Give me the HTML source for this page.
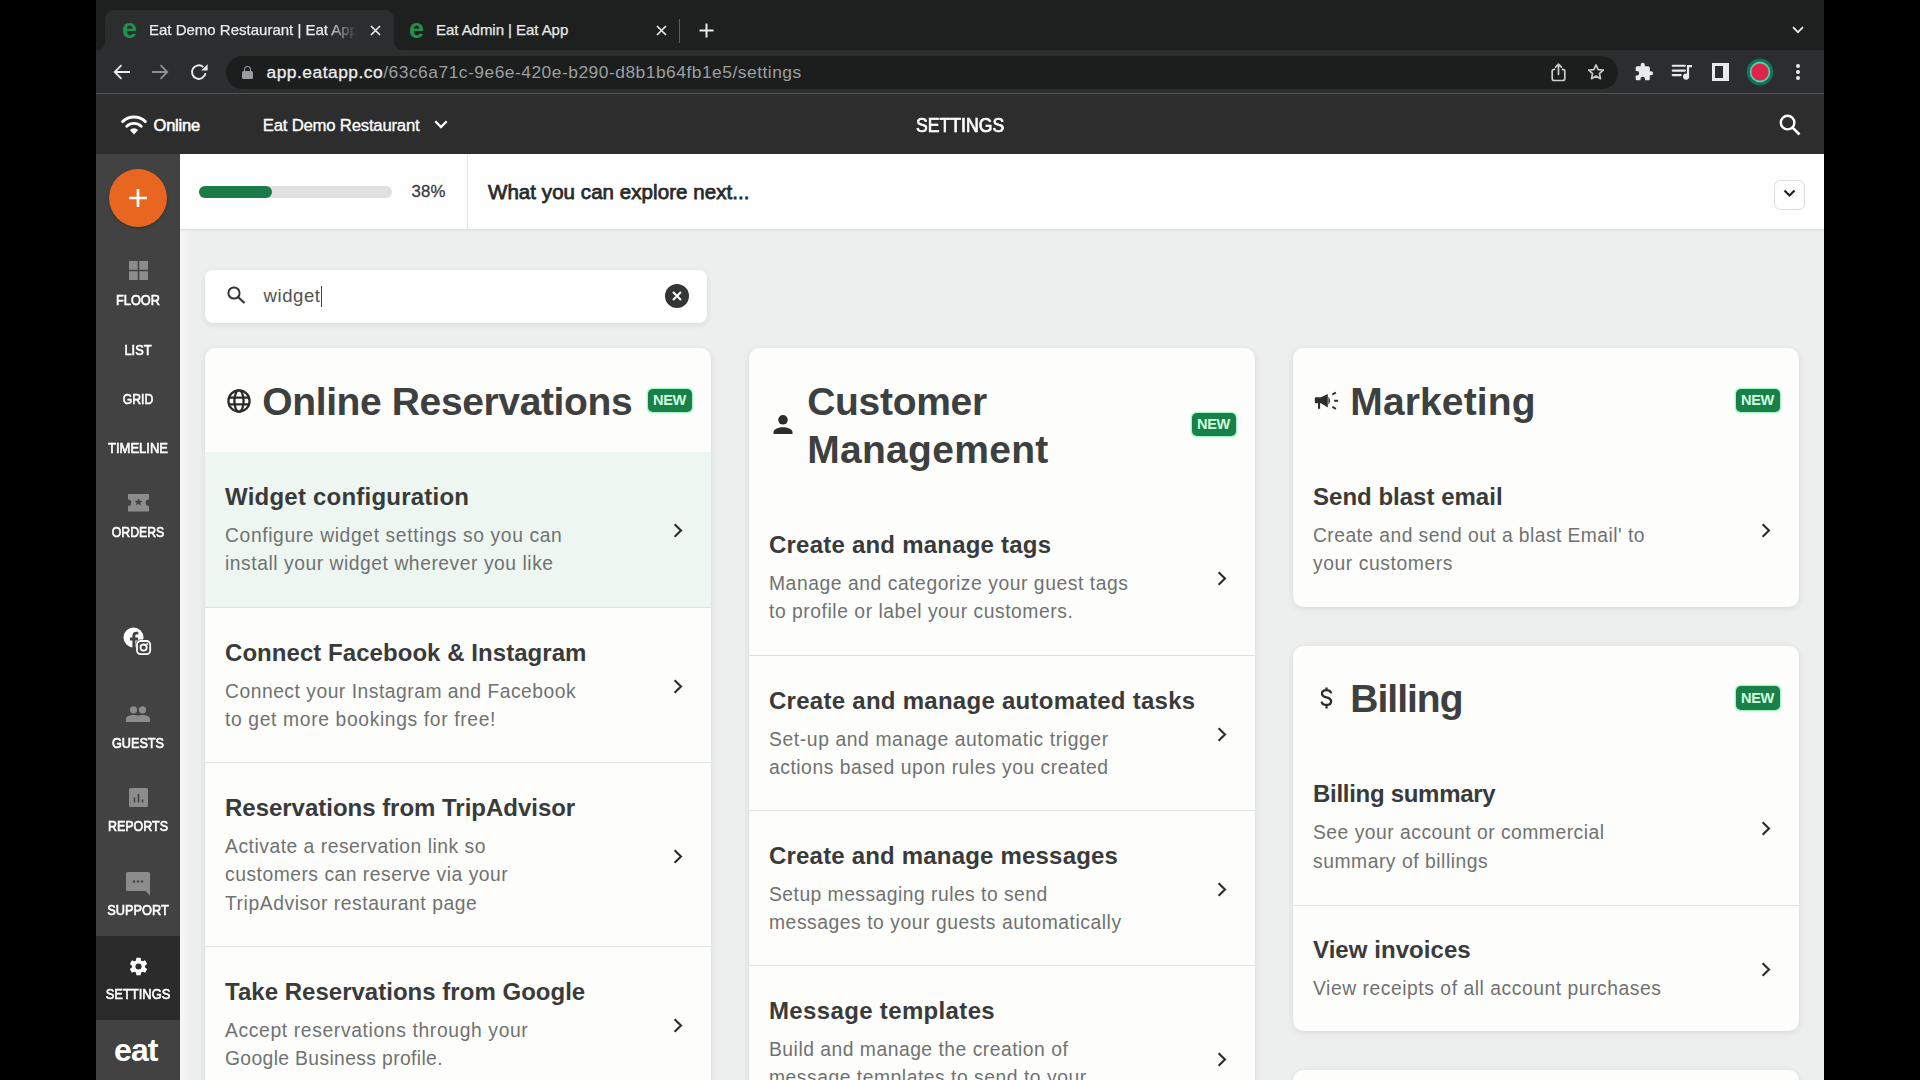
<!DOCTYPE html><html><head><meta charset="utf-8"><title>Settings</title><style>
*{margin:0;padding:0;box-sizing:border-box}
html,body{width:1920px;height:1080px;overflow:hidden;background:#000;font-family:"Liberation Sans", sans-serif}
.t{position:absolute;white-space:nowrap}
.a{position:absolute}
svg{position:absolute;overflow:visible}
.card{position:absolute;width:506px;background:#fdfdfc;border-radius:10px;box-shadow:0 2px 7px rgba(0,0,0,0.08),0 0 2px rgba(0,0,0,0.05);overflow:hidden}
.row{position:absolute;left:0;width:506px;border-top:1px solid #dfe1e0}
</style></head><body>
<div class="a" style="left:96px;top:0;width:1728px;height:50px;background:#1e201f"></div>
<div class="a" style="left:105px;top:10px;width:289px;height:42px;background:#2b2d2e;border-radius:9px 9px 0 0"></div>
<div class="a" style="left:97px;top:42px;width:8px;height:8px;background:#2b2d2e"></div>
<div class="a" style="left:97px;top:34px;width:8px;height:16px;background:#1e201f;border-radius:0 0 8px 0"></div>
<div class="a" style="left:394px;top:42px;width:8px;height:8px;background:#2b2d2e"></div>
<div class="a" style="left:394px;top:34px;width:8px;height:16px;background:#1e201f;border-radius:0 0 0 8px"></div>
<div class="a" style="left:96px;top:50px;width:1728px;height:44px;background:#2b2d2e;border-bottom:1px solid #505254"></div>
<div class="t" style="left:122.0px;top:13.5px;font-size:27px;line-height:30px;font-weight:700;color:#21914f">e</div>
<div class="t" style="left:409.0px;top:13.5px;font-size:27px;line-height:30px;font-weight:700;color:#21914f">e</div>
<div class="t" style="left:149px;top:20.5px;font-size:15px;line-height:18px;color:#e9eaea;width:208px;-webkit-text-stroke:0.25px #e9eaea;overflow:hidden;-webkit-mask-image:linear-gradient(90deg,#000 85%,transparent 100%)">Eat Demo Restaurant | Eat App</div>
<div class="t" style="left:436px;top:20.5px;font-size:15px;line-height:18px;color:#e9eaea;letter-spacing:-0.05px;-webkit-text-stroke:0.25px #e9eaea">Eat Admin | Eat App</div>
<svg style="left:369.5px;top:24.5px" width="11" height="11" viewBox="0 0 11 11"><path d="M1 1L10 10M10 1L1 10" stroke="#e8eaed" stroke-width="1.7"/></svg>
<svg style="left:655.5px;top:24.5px" width="11" height="11" viewBox="0 0 11 11"><path d="M1 1L10 10M10 1L1 10" stroke="#e8eaed" stroke-width="1.7"/></svg>
<div class="a" style="left:679px;top:19px;width:1px;height:24px;background:#5a5c5e"></div>
<svg style="left:699px;top:23px" width="15" height="15" viewBox="0 0 15 15"><path d="M7.5 0.5V14.5M0.5 7.5H14.5" stroke="#e8eaed" stroke-width="2"/></svg>
<svg style="left:1792px;top:26px" width="12" height="8" viewBox="0 0 12 8"><path d="M1 1.2L6 6.2L11 1.2" fill="none" stroke="#e8eaed" stroke-width="1.8"/></svg>
<svg style="left:113px;top:64px" width="18" height="16" viewBox="0 0 18 16"><path d="M17 8H2M8.5 1.2L1.7 8L8.5 14.8" fill="none" stroke="#e8eaed" stroke-width="1.8"/></svg>
<svg style="left:151px;top:64px" width="18" height="16" viewBox="0 0 18 16"><path d="M1 8H16M9.5 1.2L16.3 8L9.5 14.8" fill="none" stroke="#8d9093" stroke-width="1.8"/></svg>
<svg style="left:190px;top:63px" width="19" height="18" viewBox="0 0 19 18"><path d="M15.5 10.2A6.8 6.8 0 1 1 13.3 4" fill="none" stroke="#e8eaed" stroke-width="1.9"/><path d="M17.6 1.2V7.6H11.2Z" fill="#e8eaed"/></svg>
<div class="a" style="left:226px;top:55.5px;width:1392px;height:33px;background:#1c1e1d;border-radius:17px"></div>
<div class="a" style="left:242px;top:71px;width:10.5px;height:8px;background:#9a9d9f;border-radius:1.5px"></div>
<div class="a" style="left:244px;top:66px;width:6.5px;height:8px;border:1.6px solid #9a9d9f;border-bottom:none;border-radius:4px 4px 0 0"></div>
<div class="t" style="left:266.5px;top:62.3px;font-size:17.4px;line-height:20px;letter-spacing:0.5px;color:#9c9fa2"><span style="color:#ececec;-webkit-text-stroke:0.3px #ececec">app.eatapp.co</span>/63c6a71c-9e6e-420e-b290-d8b1b64fb1e5/settings</div>
<svg style="left:1550.5px;top:63px" width="15" height="18" viewBox="0 0 15 18"><path d="M4.3 6.3H3.2A2 2 0 0 0 1.2 8.3V15.5A2 2 0 0 0 3.2 17.5H11.8A2 2 0 0 0 13.8 15.5V8.3A2 2 0 0 0 11.8 6.3H10.7" fill="none" stroke="#c9cbcd" stroke-width="1.7"/><path d="M7.5 11.3V1.4M4.6 4.2L7.5 1.2L10.4 4.2" fill="none" stroke="#c9cbcd" stroke-width="1.7" stroke-linecap="round" stroke-linejoin="round"/></svg>
<svg style="left:1587px;top:63px" width="18" height="18" viewBox="0 0 24 24"><path d="M12 2.5l2.9 6.3 6.8.7-5.1 4.6 1.4 6.8L12 17.4l-6 3.5 1.4-6.8-5.1-4.6 6.8-.7z" fill="none" stroke="#c9cbcd" stroke-width="2.2" stroke-linejoin="round"/></svg>
<svg style="left:1634px;top:62px" width="20" height="20" viewBox="0 0 24 24"><path d="M20.5 11H19V7c0-1.1-.9-2-2-2h-4V3.5a2.5 2.5 0 0 0-5 0V5H4c-1.1 0-2 .9-2 2v3.8h1.5a2.7 2.7 0 0 1 0 5.4H2V20c0 1.1.9 2 2 2h3.8v-1.5a2.7 2.7 0 0 1 5.4 0V22H17c1.1 0 2-.9 2-2v-4h1.5a2.5 2.5 0 0 0 0-5z" fill="#e8eaed"/></svg>
<svg style="left:1672px;top:63px" width="21" height="17" viewBox="0 0 21 17"><path d="M0.7 2.8H12.9M0.7 7.6H12.9M0.7 12.1H8.7" stroke="#e8eaed" stroke-width="2.1" stroke-linecap="round"/><path d="M16 14V3.2H20" fill="none" stroke="#e8eaed" stroke-width="2.2"/><circle cx="14.1" cy="13.6" r="3.1" fill="#e8eaed"/></svg>
<div class="a" style="left:1712px;top:63px;width:17.2px;height:17.8px;background:#e8eaed"></div>
<div class="a" style="left:1715.1px;top:66.2px;width:7.7px;height:11.7px;background:#2b2d2e"></div>
<svg style="left:1746px;top:58px" width="28" height="28" viewBox="0 0 28 28"><circle cx="14" cy="14" r="13.4" fill="#127158"/><circle cx="14" cy="14" r="10.4" fill="#5cc9a4"/><circle cx="14" cy="14" r="8.6" fill="#e0234b"/></svg>
<div class="a" style="left:1795.6px;top:64.1px;width:4px;height:4px;border-radius:50%;background:#e8eaed"></div>
<div class="a" style="left:1795.6px;top:70.1px;width:4px;height:4px;border-radius:50%;background:#e8eaed"></div>
<div class="a" style="left:1795.6px;top:76.1px;width:4px;height:4px;border-radius:50%;background:#e8eaed"></div>
<div class="a" style="left:96px;top:94px;width:1728px;height:60px;background:#2c2d2c"></div>
<svg style="left:121px;top:114px" width="26" height="21" viewBox="0 0 26 21"><path d="M1.6 7.6A16.5 16.5 0 0 1 24.4 7.6" fill="none" stroke="#fff" stroke-width="2.9" stroke-linecap="round"/><path d="M5.8 12.2A10.5 10.5 0 0 1 20.2 12.2" fill="none" stroke="#fff" stroke-width="2.9" stroke-linecap="round"/><path d="M8.9 15.9A6.2 6.2 0 0 1 17.1 15.9L13 20.4Z" fill="#fff"/></svg>
<div class="t" style="left:153.5px;top:117.2px;font-size:16.5px;line-height:16.5px;font-weight:400;color:#ffffff;letter-spacing:-0.2px;-webkit-text-stroke:0.55px #fff;">Online</div>
<div class="t" style="left:262.8px;top:118.0px;font-size:16.8px;line-height:16.8px;font-weight:400;color:#ffffff;letter-spacing:-0.25px;-webkit-text-stroke:0.3px #fff;">Eat Demo Restaurant</div>
<svg style="left:434px;top:120px" width="14" height="9" viewBox="0 0 14 9"><path d="M1.3 1.3L7 7L12.7 1.3" fill="none" stroke="#fff" stroke-width="2.3"/></svg>
<div class="t" style="left:916.0px;top:115.9px;font-size:19.3px;line-height:19.3px;font-weight:400;color:#ffffff;letter-spacing:0px;-webkit-text-stroke:0.7px #fff;transform:scaleX(0.915);transform-origin:0 0;">SETTINGS</div>
<svg style="left:1779px;top:114px" width="22" height="22" viewBox="0 0 22 22"><circle cx="8.6" cy="8.6" r="6.8" fill="none" stroke="#fff" stroke-width="2.4"/><path d="M13.6 13.6L20.5 20.5" stroke="#fff" stroke-width="2.6"/></svg>
<div class="a" style="left:96px;top:154px;width:84px;height:926px;background:#414241"></div>
<div class="a" style="left:96px;top:936px;width:84px;height:84px;background:#2b2b2b"></div>
<div class="a" style="left:109.2px;top:168.6px;width:58.2px;height:58.2px;border-radius:50%;background:#e8661f;box-shadow:0 1px 3px rgba(0,0,0,.25)"></div>
<svg style="left:128.2px;top:187.8px" width="20" height="20" viewBox="0 0 20 20"><path d="M10 1.1V18.9M1.1 10H18.9" stroke="#fff" stroke-width="2.7"/></svg>
<svg style="left:128.5px;top:261px" width="19" height="19" viewBox="0 0 19 19" fill="#8b8c8b"><rect x="0" y="0" width="8.7" height="8.7"/><rect x="10.3" y="0" width="8.7" height="8.7"/><rect x="0" y="10.3" width="8.7" height="8.7"/><rect x="10.3" y="10.3" width="8.7" height="8.7"/></svg>
<div class="t" style="left:96px;width:84px;text-align:center;top:293.2px;font-size:14px;line-height:14px;font-weight:400;color:#fff;-webkit-text-stroke:0.6px #fff;transform:scaleX(0.912);transform-origin:42px 0">FLOOR</div>
<div class="t" style="left:96px;width:84px;text-align:center;top:342.7px;font-size:14px;line-height:14px;font-weight:400;color:#fff;-webkit-text-stroke:0.6px #fff;transform:scaleX(0.913);transform-origin:42px 0">LIST</div>
<div class="t" style="left:96px;width:84px;text-align:center;top:391.9px;font-size:14px;line-height:14px;font-weight:400;color:#fff;-webkit-text-stroke:0.6px #fff;transform:scaleX(0.871);transform-origin:42px 0">GRID</div>
<div class="t" style="left:96px;width:84px;text-align:center;top:441.2px;font-size:14px;line-height:14px;font-weight:400;color:#fff;-webkit-text-stroke:0.6px #fff;transform:scaleX(0.929);transform-origin:42px 0">TIMELINE</div>
<svg style="left:127.5px;top:493.5px" width="21" height="17.5" viewBox="0 0 21 17.5"><path d="M0 0H21V5.5A3 3 0 0 0 21 12V17.5H0V12A3 3 0 0 0 0 5.5Z" fill="#8b8c8b"/><path d="M10.5 4.2l1.2 2.5 2.7.3-2 1.8.6 2.6-2.5-1.4-2.5 1.4.6-2.6-2-1.8 2.7-.3z" fill="#414241"/></svg>
<div class="t" style="left:96px;width:84px;text-align:center;top:525.2px;font-size:14px;line-height:14px;font-weight:400;color:#fff;-webkit-text-stroke:0.6px #fff;transform:scaleX(0.876);transform-origin:42px 0">ORDERS</div>
<svg style="left:123px;top:627px" width="29" height="29" viewBox="0 0 29 29"><circle cx="10.5" cy="10.5" r="10" fill="#fff"/><path d="M12.3 21V13.5H14.8L15.2 10.6H12.3V8.8C12.3 8 12.6 7.4 13.7 7.4H15.3V4.8C15 4.8 14.1 4.7 13.1 4.7 10.9 4.7 9.4 6 9.4 8.5V10.6H7V13.5H9.4V21Z" fill="#414241"/><rect x="12.6" y="12.6" width="16" height="16" rx="4.5" fill="#414241"/><rect x="14" y="14" width="13.2" height="13.2" rx="3.6" fill="none" stroke="#fff" stroke-width="1.8"/><circle cx="20.6" cy="20.6" r="3.1" fill="none" stroke="#fff" stroke-width="1.8"/><circle cx="24.2" cy="17" r="0.9" fill="#fff"/></svg>
<svg style="left:126px;top:705.5px" width="24" height="16" viewBox="0 0 24 16" fill="#8b8c8b"><circle cx="7.5" cy="3.8" r="3.6"/><circle cx="16.5" cy="3.8" r="3.6"/><path d="M0 16V13C0 10.3 4 9 7.5 9S15 10.3 15 13V16Z"/><path d="M9.5 16V13C9.5 10.3 13 9 16.5 9S24 10.3 24 13V16Z"/></svg>
<div class="t" style="left:96px;width:84px;text-align:center;top:735.7px;font-size:14px;line-height:14px;font-weight:400;color:#fff;-webkit-text-stroke:0.6px #fff;transform:scaleX(0.907);transform-origin:42px 0">GUESTS</div>
<svg style="left:128.5px;top:788px" width="19" height="19" viewBox="0 0 19 19"><rect width="19" height="19" rx="1.5" fill="#8b8c8b"/><path d="M5.5 9.5V14.5M9.5 6V14.5M13.5 11.5V14.5" stroke="#414241" stroke-width="1.6"/></svg>
<div class="t" style="left:96px;width:84px;text-align:center;top:818.9px;font-size:14px;line-height:14px;font-weight:400;color:#fff;-webkit-text-stroke:0.6px #fff;transform:scaleX(0.891);transform-origin:42px 0">REPORTS</div>
<svg style="left:126px;top:871.5px" width="24" height="23.5" viewBox="0 0 24 23.5"><path d="M0 1.5A1.5 1.5 0 0 1 1.5 0H22.5A1.5 1.5 0 0 1 24 1.5V23.5L19.5 19H1.5A1.5 1.5 0 0 1 0 17.5Z" fill="#8b8c8b"/><circle cx="8" cy="9.5" r="1.2" fill="#414241"/><circle cx="12" cy="9.5" r="1.2" fill="#414241"/><circle cx="16" cy="9.5" r="1.2" fill="#414241"/></svg>
<div class="t" style="left:96px;width:84px;text-align:center;top:903.2px;font-size:14px;line-height:14px;font-weight:400;color:#fff;-webkit-text-stroke:0.6px #fff;transform:scaleX(0.912);transform-origin:42px 0">SUPPORT</div>
<svg style="left:127.5px;top:955.5px" width="21" height="21" viewBox="0 0 24 24"><path fill="#fff" d="M19.4 13c.04-.32.06-.66.06-1s-.02-.68-.06-1l2.1-1.65c.2-.15.25-.42.13-.64l-2-3.46c-.12-.22-.4-.3-.6-.22l-2.5 1c-.52-.4-1.08-.73-1.7-.98l-.37-2.65A.5.5 0 0 0 14 2h-4a.5.5 0 0 0-.5.42l-.37 2.65c-.62.25-1.18.58-1.7.98l-2.5-1c-.22-.08-.48 0-.6.22l-2 3.46c-.13.22-.07.49.12.64L4.57 11c-.04.32-.07.66-.07 1s.03.68.07 1l-2.1 1.65c-.2.15-.25.42-.13.64l2 3.46c.12.22.4.3.6.22l2.5-1c.52.4 1.08.73 1.7.98l.37 2.65c.04.24.25.42.5.42h4c.25 0 .46-.18.5-.42l.37-2.65c.62-.25 1.18-.58 1.7-.98l2.5 1c.22.08.48 0 .6-.22l2-3.46c.12-.22.07-.49-.13-.64zM12 15.5A3.5 3.5 0 1 1 12 8.5a3.5 3.5 0 0 1 0 7z"/></svg>
<div class="t" style="left:96px;width:84px;text-align:center;top:987.0px;font-size:14px;line-height:14px;font-weight:400;color:#fff;-webkit-text-stroke:0.6px #fff;transform:scaleX(0.923);transform-origin:42px 0">SETTINGS</div>
<div class="t" style="left:114px;top:1033.7px;font-size:32px;line-height:32px;font-weight:700;color:#fff;letter-spacing:-0.9px">eat</div>
<div class="a" style="left:180px;top:154px;width:1644px;height:926px;background:#ecefed"></div>
<div class="a" style="left:180px;top:230px;width:14px;height:850px;background:linear-gradient(90deg,#f5f6f5,#ecefed)"></div>
<div class="a" style="left:180px;top:154px;width:1644px;height:76px;background:#fdfefd;border-bottom:1px solid #dde0de;box-shadow:0 1px 2px rgba(0,0,0,0.04)"></div>
<div class="a" style="left:199px;top:186px;width:193px;height:12px;border-radius:6px;background:#dfe2e1"></div>
<div class="a" style="left:199px;top:186px;width:73px;height:12px;border-radius:6px;background:#1b7b47"></div>
<div class="t" style="left:411.5px;top:183.5px;font-size:16.8px;line-height:16.8px;font-weight:400;color:#3a3c3b;letter-spacing:0.2px;-webkit-text-stroke:0.3px #3a3c3b;">38%</div>
<div class="a" style="left:467px;top:154px;width:1px;height:76px;background:#e3e5e4"></div>
<div class="t" style="left:488.0px;top:182.3px;font-size:20.5px;line-height:20.5px;font-weight:400;color:#282a29;letter-spacing:0.06px;-webkit-text-stroke:0.75px #282a29;">What you can explore next...</div>
<div class="a" style="left:1774px;top:179.5px;width:31px;height:30px;border:1px solid #dcdfde;border-radius:6px;background:#fdfefd"></div>
<svg style="left:1783px;top:189px" width="13" height="9" viewBox="0 0 13 9"><path d="M1.5 1.5L6.5 6.5L11.5 1.5" fill="none" stroke="#222" stroke-width="2.2"/></svg>
<div class="a" style="left:205px;top:270px;width:502px;height:53px;border-radius:8px;background:#fdfefd;box-shadow:0 2px 6px rgba(0,0,0,0.09)"></div>
<svg style="left:227px;top:286px" width="19" height="18" viewBox="0 0 19 18"><circle cx="7" cy="7" r="5.6" fill="none" stroke="#333" stroke-width="2"/><path d="M11 11L17.5 17" stroke="#333" stroke-width="2.2"/></svg>
<div class="t" style="left:263.5px;top:285px;font-size:18.5px;line-height:22px;color:#505251;letter-spacing:0.6px">widget</div>
<div class="a" style="left:320.5px;top:286px;width:1px;height:21px;background:#444"></div>
<div class="a" style="left:665px;top:283.5px;width:24px;height:24px;border-radius:50%;background:#333534"></div>
<svg style="left:671px;top:289.5px" width="12" height="12" viewBox="0 0 12 12"><path d="M2 2L10 10M10 2L2 10" stroke="#fff" stroke-width="2"/></svg>
<div class="card" style="left:205px;top:348px;height:760px"><svg style="left:22px;top:41px" width="24" height="24" viewBox="0 0 24 24"><g fill="none" stroke="#2b2d2c" stroke-width="2.3"><circle cx="12" cy="12" r="10.6"/><ellipse cx="12" cy="12" rx="4.6" ry="10.8"/><path d="M1.8 8.6H22.2M1.8 15.4H22.2"/></g></svg><div class="t" style="left:57.3px;top:33.5px;font-size:39px;line-height:39px;font-weight:700;color:#3e403f;letter-spacing:-0.38px;">Online Reservations</div><div class="a" style="left:443px;top:40.8px;width:43.5px;height:23.5px;border-radius:5px;background:#19804a;box-shadow:0 0 1.5px 0.5px #8ef2b4"></div><div class="t" style="left:448.0px;top:45.3px;font-size:14.6px;line-height:14.6px;font-weight:700;color:#cfffdf;letter-spacing:-0.35px;">NEW</div><div class="row" style="top:104px;height:155px;background:#eef6f2;border-top:none;"><div class="t" style="left:20.0px;top:32.9px;font-size:24px;line-height:24px;font-weight:700;color:#393b3a;letter-spacing:0.22px;">Widget configuration</div><div class="t" style="left:20.0px;top:73.5px;font-size:19.3px;line-height:19.3px;font-weight:400;color:#6f7271;letter-spacing:0.62px;">Configure widget settings so you can</div><div class="t" style="left:20.0px;top:102.2px;font-size:19.3px;line-height:19.3px;font-weight:400;color:#6f7271;letter-spacing:0.54px;">install your widget wherever you like</div><svg style="left:467.5px;top:71.0px" width="10" height="15" viewBox="0 0 10 15"><path d="M1.6 1.3L8 7.5L1.6 13.7" fill="none" stroke="#2a2c2b" stroke-width="2.1"/></svg></div><div class="row" style="top:259px;height:155px;"><div class="t" style="left:20.0px;top:32.9px;font-size:24px;line-height:24px;font-weight:700;color:#393b3a;letter-spacing:0.05px;">Connect Facebook &amp; Instagram</div><div class="t" style="left:20.0px;top:73.5px;font-size:19.3px;line-height:19.3px;font-weight:400;color:#6f7271;letter-spacing:0.51px;">Connect your Instagram and Facebook</div><div class="t" style="left:20.0px;top:102.2px;font-size:19.3px;line-height:19.3px;font-weight:400;color:#6f7271;letter-spacing:0.64px;">to get more bookings for free!</div><svg style="left:467.5px;top:71.0px" width="10" height="15" viewBox="0 0 10 15"><path d="M1.6 1.3L8 7.5L1.6 13.7" fill="none" stroke="#2a2c2b" stroke-width="2.1"/></svg></div><div class="row" style="top:414px;height:184px;"><div class="t" style="left:20.0px;top:32.9px;font-size:24px;line-height:24px;font-weight:700;color:#393b3a;letter-spacing:-0.02px;">Reservations from TripAdvisor</div><div class="t" style="left:20.0px;top:73.5px;font-size:19.3px;line-height:19.3px;font-weight:400;color:#6f7271;letter-spacing:0.52px;">Activate a reservation link so</div><div class="t" style="left:20.0px;top:102.2px;font-size:19.3px;line-height:19.3px;font-weight:400;color:#6f7271;letter-spacing:0.51px;">customers can reserve via your</div><div class="t" style="left:20.0px;top:130.9px;font-size:19.3px;line-height:19.3px;font-weight:400;color:#6f7271;letter-spacing:0.56px;">TripAdvisor restaurant page</div><svg style="left:467.5px;top:85.5px" width="10" height="15" viewBox="0 0 10 15"><path d="M1.6 1.3L8 7.5L1.6 13.7" fill="none" stroke="#2a2c2b" stroke-width="2.1"/></svg></div><div class="row" style="top:598px;height:155px;"><div class="t" style="left:20.0px;top:32.9px;font-size:24px;line-height:24px;font-weight:700;color:#393b3a;letter-spacing:0.02px;">Take Reservations from Google</div><div class="t" style="left:20.0px;top:73.5px;font-size:19.3px;line-height:19.3px;font-weight:400;color:#6f7271;letter-spacing:0.64px;">Accept reservations through your</div><div class="t" style="left:20.0px;top:102.2px;font-size:19.3px;line-height:19.3px;font-weight:400;color:#6f7271;letter-spacing:0.37px;">Google Business profile.</div><svg style="left:467.5px;top:71.0px" width="10" height="15" viewBox="0 0 10 15"><path d="M1.6 1.3L8 7.5L1.6 13.7" fill="none" stroke="#2a2c2b" stroke-width="2.1"/></svg></div></div>
<div class="card" style="left:749px;top:348px;height:760px"><svg style="left:24px;top:67px" width="20" height="19" viewBox="0 0 20 19" fill="#2b2d2c"><circle cx="10" cy="4.8" r="4.8"/><path d="M0.5 19V17C0.5 14 6 12.2 10 12.2S19.5 14 19.5 17V19Z"/></svg><div class="t" style="left:58.2px;top:33.5px;font-size:39px;line-height:39px;font-weight:700;color:#3e403f;letter-spacing:-0.3px;">Customer</div><div class="t" style="left:58.2px;top:82.3px;font-size:39px;line-height:39px;font-weight:700;color:#3e403f;letter-spacing:0.3px;">Management</div><div class="a" style="left:443px;top:64.8px;width:43.5px;height:23.5px;border-radius:5px;background:#19804a;box-shadow:0 0 1.5px 0.5px #8ef2b4"></div><div class="t" style="left:448.0px;top:69.3px;font-size:14.6px;line-height:14.6px;font-weight:700;color:#cfffdf;letter-spacing:-0.35px;">NEW</div><div class="row" style="top:152px;height:155px;border-top:none;"><div class="t" style="left:20.0px;top:32.9px;font-size:24px;line-height:24px;font-weight:700;color:#393b3a;letter-spacing:0.22px;">Create and manage tags</div><div class="t" style="left:20.0px;top:73.5px;font-size:19.3px;line-height:19.3px;font-weight:400;color:#6f7271;letter-spacing:0.56px;">Manage and categorize your guest tags</div><div class="t" style="left:20.0px;top:102.2px;font-size:19.3px;line-height:19.3px;font-weight:400;color:#6f7271;letter-spacing:0.55px;">to profile or label your customers.</div><svg style="left:467.5px;top:71.0px" width="10" height="15" viewBox="0 0 10 15"><path d="M1.6 1.3L8 7.5L1.6 13.7" fill="none" stroke="#2a2c2b" stroke-width="2.1"/></svg></div><div class="row" style="top:307px;height:155px;"><div class="t" style="left:20.0px;top:32.9px;font-size:24px;line-height:24px;font-weight:700;color:#393b3a;letter-spacing:0.27px;">Create and manage automated tasks</div><div class="t" style="left:20.0px;top:73.5px;font-size:19.3px;line-height:19.3px;font-weight:400;color:#6f7271;letter-spacing:0.61px;">Set-up and manage automatic trigger</div><div class="t" style="left:20.0px;top:102.2px;font-size:19.3px;line-height:19.3px;font-weight:400;color:#6f7271;letter-spacing:0.53px;">actions based upon rules you created</div><svg style="left:467.5px;top:71.0px" width="10" height="15" viewBox="0 0 10 15"><path d="M1.6 1.3L8 7.5L1.6 13.7" fill="none" stroke="#2a2c2b" stroke-width="2.1"/></svg></div><div class="row" style="top:462px;height:155px;"><div class="t" style="left:20.0px;top:32.9px;font-size:24px;line-height:24px;font-weight:700;color:#393b3a;letter-spacing:0.19px;">Create and manage messages</div><div class="t" style="left:20.0px;top:73.5px;font-size:19.3px;line-height:19.3px;font-weight:400;color:#6f7271;letter-spacing:0.48px;">Setup messaging rules to send</div><div class="t" style="left:20.0px;top:102.2px;font-size:19.3px;line-height:19.3px;font-weight:400;color:#6f7271;letter-spacing:0.55px;">messages to your guests automatically</div><svg style="left:467.5px;top:71.0px" width="10" height="15" viewBox="0 0 10 15"><path d="M1.6 1.3L8 7.5L1.6 13.7" fill="none" stroke="#2a2c2b" stroke-width="2.1"/></svg></div><div class="row" style="top:617px;height:184px;"><div class="t" style="left:20.0px;top:32.9px;font-size:24px;line-height:24px;font-weight:700;color:#393b3a;letter-spacing:0.35px;">Message templates</div><div class="t" style="left:20.0px;top:73.5px;font-size:19.3px;line-height:19.3px;font-weight:400;color:#6f7271;letter-spacing:0.51px;">Build and manage the creation of</div><div class="t" style="left:20.0px;top:102.2px;font-size:19.3px;line-height:19.3px;font-weight:400;color:#6f7271;letter-spacing:0.53px;">message templates to send to your</div><div class="t" style="left:20.0px;top:130.9px;font-size:19.3px;line-height:19.3px;font-weight:400;color:#6f7271;letter-spacing:0.5px;">guests</div><svg style="left:467.5px;top:85.5px" width="10" height="15" viewBox="0 0 10 15"><path d="M1.6 1.3L8 7.5L1.6 13.7" fill="none" stroke="#2a2c2b" stroke-width="2.1"/></svg></div></div>
<div class="card" style="left:1293px;top:348px;height:259px"><svg style="left:21px;top:42px" width="25" height="21" viewBox="0 0 25 21" fill="#2b2d2c"><path d="M2 7.2H7L13.8 3.9V17.5L7 13.2H2A1.2 1.2 0 0 1 0.8 12V8.4A1.2 1.2 0 0 1 2 7.2Z"/><rect x="4" y="12.5" width="2.1" height="6.3"/><path d="M14.4 6.7Q17.6 10.7 14.4 14.7Z"/><path d="M18.3 4.6L21.9 2.5M20.1 10.7H24.1M18.3 16.8L21.9 18.9" stroke="#2b2d2c" stroke-width="1.9" fill="none"/></svg><div class="t" style="left:57.3px;top:33.5px;font-size:39px;line-height:39px;font-weight:700;color:#3e403f;letter-spacing:0.12px;">Marketing</div><div class="a" style="left:443px;top:40.8px;width:43.5px;height:23.5px;border-radius:5px;background:#19804a;box-shadow:0 0 1.5px 0.5px #8ef2b4"></div><div class="t" style="left:448.0px;top:45.3px;font-size:14.6px;line-height:14.6px;font-weight:700;color:#cfffdf;letter-spacing:-0.35px;">NEW</div><div class="row" style="top:104px;height:155px;border-top:none;"><div class="t" style="left:20.0px;top:32.9px;font-size:24px;line-height:24px;font-weight:700;color:#393b3a;letter-spacing:0.01px;">Send blast email</div><div class="t" style="left:20.0px;top:73.5px;font-size:19.3px;line-height:19.3px;font-weight:400;color:#6f7271;letter-spacing:0.44px;">Create and send out a blast Email' to</div><div class="t" style="left:20.0px;top:102.2px;font-size:19.3px;line-height:19.3px;font-weight:400;color:#6f7271;letter-spacing:0.59px;">your customers</div><svg style="left:467.5px;top:71.0px" width="10" height="15" viewBox="0 0 10 15"><path d="M1.6 1.3L8 7.5L1.6 13.7" fill="none" stroke="#2a2c2b" stroke-width="2.1"/></svg></div></div>
<div class="card" style="left:1293px;top:645.5px;height:385.5px"><svg style="left:26.5px;top:41.5px" width="13" height="22" viewBox="0 0 13 22"><path d="M11 6.4C10.7 4.4 8.9 3.2 6.5 3.2C3.8 3.2 2 4.6 2 6.7C2 8.9 4 9.7 6.5 10.3C9.1 10.9 11.1 11.8 11.1 14.3C11.1 16.6 9.2 18 6.5 18C3.7 18 1.9 16.7 1.6 14.6M6.5 0.4V3.2M6.5 18V21.6" fill="none" stroke="#2b2d2c" stroke-width="2.3"/></svg><div class="t" style="left:57.3px;top:33.5px;font-size:39px;line-height:39px;font-weight:700;color:#3e403f;letter-spacing:-1.0px;">Billing</div><div class="a" style="left:443px;top:40.8px;width:43.5px;height:23.5px;border-radius:5px;background:#19804a;box-shadow:0 0 1.5px 0.5px #8ef2b4"></div><div class="t" style="left:448.0px;top:45.3px;font-size:14.6px;line-height:14.6px;font-weight:700;color:#cfffdf;letter-spacing:-0.35px;">NEW</div><div class="row" style="top:104px;height:155px;border-top:none;"><div class="t" style="left:20.0px;top:32.9px;font-size:24px;line-height:24px;font-weight:700;color:#393b3a;letter-spacing:-0.29px;">Billing summary</div><div class="t" style="left:20.0px;top:73.5px;font-size:19.3px;line-height:19.3px;font-weight:400;color:#6f7271;letter-spacing:0.5px;">See your account or commercial</div><div class="t" style="left:20.0px;top:102.2px;font-size:19.3px;line-height:19.3px;font-weight:400;color:#6f7271;letter-spacing:0.54px;">summary of billings</div><svg style="left:467.5px;top:71.0px" width="10" height="15" viewBox="0 0 10 15"><path d="M1.6 1.3L8 7.5L1.6 13.7" fill="none" stroke="#2a2c2b" stroke-width="2.1"/></svg></div><div class="row" style="top:259px;height:126px;"><div class="t" style="left:20.0px;top:32.9px;font-size:24px;line-height:24px;font-weight:700;color:#393b3a;letter-spacing:0.06px;">View invoices</div><div class="t" style="left:20.0px;top:73.5px;font-size:19.3px;line-height:19.3px;font-weight:400;color:#6f7271;letter-spacing:0.55px;">View receipts of all account purchases</div><svg style="left:467.5px;top:56.5px" width="10" height="15" viewBox="0 0 10 15"><path d="M1.6 1.3L8 7.5L1.6 13.7" fill="none" stroke="#2a2c2b" stroke-width="2.1"/></svg></div></div>
<div class="card" style="left:1293px;top:1070px;height:100px"></div>
</body></html>
